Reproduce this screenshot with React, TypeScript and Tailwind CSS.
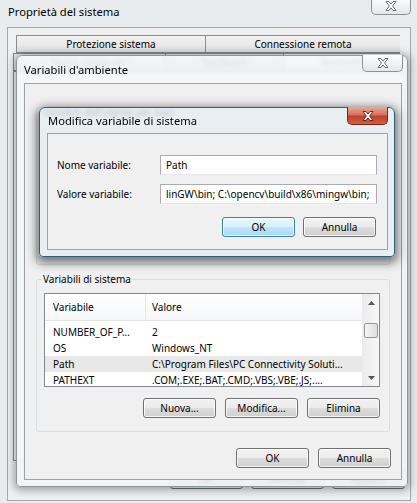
import React from "react";

// Vista-style "X" glyph used in the caption buttons
function XGlyph({ red }: { red?: boolean }) {
  return (
    <svg width="12" height="10" viewBox="0 0 12 10">
      <path
        d="M1 0.5h3l2 2.6 2-2.6h3L7.6 5 11 9.5H8L6 6.9 4 9.5H1L4.4 5z"
        fill="#fff"
        stroke={red ? "#5c1a10" : "#5d6369"}
        strokeWidth="0.9"
        strokeLinejoin="round"
      />
    </svg>
  );
}

function Arrow({ up }: { up?: boolean }) {
  return (
    <svg width="7" height="4" viewBox="0 0 7 4">
      <path d={up ? "M0 4L3.5 0 7 4z" : "M0 0h7L3.5 4z"} fill="#555" />
    </svg>
  );
}

function Button({ label, focus }: { label: string; focus?: boolean }) {
  return (
    <button
      type="button"
      className={
        focus
          ? "flex h-[20px] w-[73px] items-center justify-center rounded-[3px] border border-[#3c7fb1] bg-[linear-gradient(180deg,#eaf6fd_0%,#d9f0fc_50%,#bee6fd_50%,#a7d9f5_100%)] text-[10px] text-black shadow-[inset_0_0_0_1px_rgba(255,255,255,0.7)]"
          : "flex h-[20px] w-[73px] items-center justify-center rounded-[3px] border border-[#707070] bg-[linear-gradient(180deg,#f2f2f2_0%,#ebebeb_50%,#dddddd_50%,#cfcfcf_100%)] text-[10px] text-black shadow-[inset_0_0_0_1px_rgba(255,255,255,0.8)]"
      }
    >
      {label}
    </button>
  );
}

function Tab({ label, w, selected }: { label: string; w: string; selected?: boolean }) {
  return (
    <div
      className={`${w} flex h-[18px] items-center justify-center border border-r-0 border-[#898c95] ${
        selected ? "bg-white" : "bg-[linear-gradient(180deg,#f2f2f2,#e3e3e3)]"
      }`}
    >
      {label}
    </div>
  );
}

const rows = [
  ["NUMBER_OF_P...", "2"],
  ["OS", "Windows_NT"],
  ["Path", "C:\\Program Files\\PC Connectivity Soluti..."],
  ["PATHEXT", ".COM;.EXE;.BAT;.CMD;.VBS;.VBE;.JS;...."],
];

export default function App() {
  return (
    <div className="relative h-[503px] w-[417px] overflow-hidden bg-[#e9ecee] font-['Noto_Sans',sans-serif] text-[10px] leading-[16px] text-black">
      {/* Proprietà del sistema */}
      <div className="absolute left-0 top-0 flex h-[503px] w-[417px] flex-col">
        <div className="flex h-[27px] shrink-0 items-start">
          <span className="pl-[8px] pt-[4px] text-[11.2px]">Proprietà del sistema</span>
          <div className="ml-auto mr-[6px] mt-[-3px] flex h-[18px] w-[40px] items-center justify-center rounded-b-[5px] border border-t-0 border-[#8b9196] bg-[linear-gradient(180deg,#fdfdfd,#e4e8eb)]">
            <XGlyph />
          </div>
        </div>
        <div className="ml-[7px] mr-[6px] flex h-[474px] flex-col border border-[#a3a9ae] bg-[#f0f0f0]">
          <div className="ml-[8px] mt-[7px] flex">
            <Tab label="Protezione sistema" w="w-[189px]" />
            <Tab label="Connessione remota" w="w-[195px] border-r" />
          </div>
          <div className="ml-[5px] flex text-[#555]">
            <Tab label="Nome computer" w="w-[152px]" />
            <Tab label="Hardware" w="w-[118px]" />
            <Tab label="Avanzate" w="w-[117px] border-r" selected />
          </div>
          <div className="ml-[5px] h-[390px] w-[392px] border border-[#898c95] bg-[#fcfcfc]" />
          <div className="mt-[8px] flex justify-end gap-[8px] pr-[5px]">
            <Button label="OK" />
            <Button label="Annulla" />
            <Button label="Applica" />
          </div>
        </div>
      </div>

      {/* Variabili d'ambiente */}
      <div className="absolute left-[16px] top-[55px] flex h-[432px] w-[392px] flex-col rounded-t-[6px] rounded-b-[4px] border border-[#8e969d] bg-[#f3f5f7]/85 shadow-[0_1px_8px_2px_rgba(0,0,0,0.35)] backdrop-blur-[2px]">
        <div className="flex h-[27px] shrink-0 items-start">
          <span className="pl-[7px] pt-[6px] text-[11.2px]">Variabili d'ambiente</span>
          <div className="ml-auto mr-[4px] mt-[-1px] flex h-[17px] w-[41px] items-center justify-center rounded-b-[5px] border border-t-0 border-[#8b9196] bg-[linear-gradient(180deg,#fdfdfd,#e4e8eb)]">
            <XGlyph />
          </div>
        </div>
        <div className="ml-[7px] mr-[5px] flex h-[397px] flex-col border border-[#9ca3a9] bg-[#f0f0f0]">
          <fieldset className="ml-[11px] mt-[20px] h-[161px] w-[354px] rounded-[3px] border border-[#d5dfe5] pl-[5px]">
            <legend className="px-[1px]">Variabili dell'utente per Ivan</legend>
          </fieldset>
          <fieldset className="ml-[11px] mt-[6px] flex w-[354px] flex-col rounded-[3px] border border-[#d5dfe5] pb-[13px] pl-[5px]">
            <legend className="px-[1px]">Variabili di sistema</legend>
            <div className="ml-[2px] mt-[6px] flex h-[94px] w-[336px] border border-[#828790] bg-white">
              <div className="flex min-w-0 flex-1 flex-col overflow-hidden">
                <div className="flex h-[27px] shrink-0 border-b border-[#e5e5e5] bg-[linear-gradient(180deg,#ffffff,#f6f7f9)]">
                  <div className="flex w-[101px] items-center border-r border-[#e3e8ee] pl-[8px]">Variabile</div>
                  <div className="flex items-center pl-[6px]">Valore</div>
                </div>
                <div className="pt-[3px]">
                  {rows.map(([name, value]) => (
                    <div
                      key={name}
                      className={`flex h-[16px] items-center whitespace-nowrap ${name === "Path" ? "bg-[#e8e8e8]" : ""}`}
                    >
                      <div className="w-[101px] shrink-0 pl-[8px]">{name}</div>
                      <div className="pl-[6px]">{value}</div>
                    </div>
                  ))}
                </div>
              </div>
              <div className="flex w-[17px] shrink-0 flex-col border-l border-[#ececec] bg-[linear-gradient(90deg,#ececec,#f8f8f8)]">
                <div className="flex h-[17px] items-center justify-center">
                  <Arrow up />
                </div>
                <div className="flex-1">
                  <div className="mx-[1px] mt-[12px] h-[15px] rounded-[2px] border border-[#979797] bg-[linear-gradient(90deg,#f5f5f5,#dedede)]" />
                </div>
                <div className="flex h-[17px] items-center justify-center">
                  <Arrow />
                </div>
              </div>
            </div>
            <div className="mt-[11px] flex justify-end gap-[9px] pr-[9px]">
              <Button label="Nuova..." />
              <Button label="Modifica..." />
              <Button label="Elimina" />
            </div>
          </fieldset>
          <div className="mt-[16px] flex justify-end gap-[9px] pr-[10px]">
            <Button label="OK" />
            <Button label="Annulla" />
          </div>
        </div>
      </div>

      {/* Modifica variabile di sistema */}
      <div className="absolute left-[39px] top-[107px] flex h-[150px] w-[356px] flex-col rounded-t-[6px] rounded-b-[4px] border border-[#2d5f78] bg-[#e6eff4]/80 shadow-[0_3px_10px_3px_rgba(0,0,0,0.5)] backdrop-blur-[2px]">
        <div className="flex h-[25px] shrink-0 items-start">
          <span className="pl-[8px] pt-[5px] text-[11.2px]">Modifica variabile di sistema</span>
          <div className="ml-auto mr-[6px] mt-[-1px] flex h-[18px] w-[41px] items-center justify-center rounded-b-[5px] border border-t-0 border-[#7a2518] bg-[linear-gradient(180deg,#eaa99b_0%,#d9715d_45%,#c0412a_55%,#d0603f_100%)]">
            <XGlyph red />
          </div>
        </div>
        <div className="ml-[7px] mr-[6px] flex h-[117px] flex-col border border-[#9ca3a9] bg-[#f0f0f0]">
          <div className="mt-[21px] flex items-center">
            <span className="w-[112px] pl-[9px]">Nome variabile:</span>
            <div className="flex h-[20px] w-[217px] items-center border border-[#abadb3] border-b-[#e3e9ef] bg-white pl-[5px]">Path</div>
          </div>
          <div className="mt-[9px] flex items-center">
            <span className="w-[112px] pl-[9px]">Valore variabile:</span>
            <div className="flex h-[20px] w-[217px] items-center overflow-hidden whitespace-nowrap border border-[#abadb3] border-b-[#e3e9ef] bg-white pl-[5px]">
              linGW\bin; C:\opencv\build\x86\mingw\bin;
            </div>
          </div>
          <div className="mt-[13px] flex justify-end gap-[8px] pr-[11px]">
            <Button label="OK" focus />
            <Button label="Annulla" />
          </div>
        </div>
      </div>
    </div>
  );
}
